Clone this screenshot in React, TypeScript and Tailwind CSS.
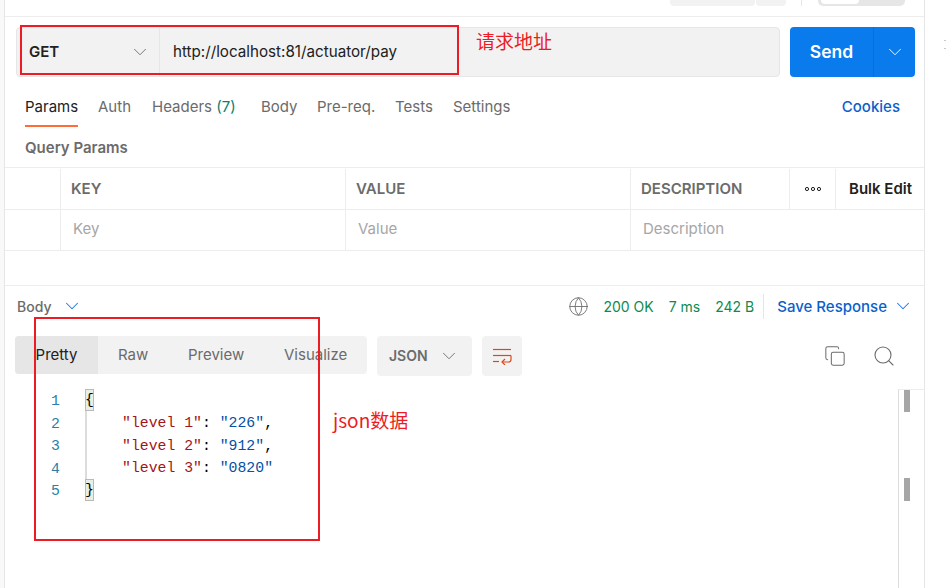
import { ChevronDown, Copy, Globe, Search } from 'lucide-react';

const requestTabs = [
  { label: 'Params', active: true, width: 'w-[73px]' },
  { label: 'Auth', width: 'w-[54px]' },
  { label: 'Headers', count: '(7)', width: 'w-[109px]' },
  { label: 'Body', width: 'w-[56px]' },
  { label: 'Pre-req.', width: 'w-[78px]' },
  { label: 'Tests', width: 'w-[58px]' },
  { label: 'Settings', width: 'w-[70px]' },
];

const codeLines = [
  { key: 'level 1', value: '226', comma: true },
  { key: 'level 2', value: '912', comma: true },
  { key: 'level 3', value: '0820', comma: false },
];

function Bracket({ glyph }: { glyph: string }) {
  return (
    <span className="flex h-[22px] w-[9px] items-center justify-center border border-[#b9b9b9] bg-[#e8efe6] text-black">
      {glyph}
    </span>
  );
}

function App() {
  return (
    <div className="relative flex h-[588px] w-[946px] overflow-hidden bg-white font-['Inter',sans-serif] text-[15px] text-[#6b6b6b]">
      <div className="w-[5px] shrink-0 border-r border-[#e6e6e6] bg-[#f9f9f9]" />

      <div className="flex w-[920px] shrink-0 flex-col border-r border-[#e6e6e6]">
        {/* top strip */}
        <div className="flex h-[17px] shrink-0 items-start justify-end border-b border-[#ededed] pr-[19px]">
          <div className="h-[6px] w-[85px] rounded-b-[4px] bg-[#f2f2f2]" />
          <div className="ml-[1px] h-[6px] w-[30px] rounded-b-[4px] bg-[#f2f2f2]" />
          <div className="ml-[15px] h-[6px] w-px bg-[#e6e6e6]" />
          <div className="ml-[16px] flex h-[6px] w-[87px] rounded-b-[5px] bg-[#e6e6e6]">
            <div className="ml-[3px] h-[4px] w-[38px] rounded-b-[4px] bg-white" />
          </div>
        </div>

        {/* url bar */}
        <div className="mt-[10px] flex h-[50px] shrink-0 gap-[10px] pl-[11px]">
          <div className="flex w-[764px] rounded-[4px] border border-[#e6e6e6] bg-[#f2f2f2]">
            <div className="flex w-[143px] items-center justify-between border-r border-[#e6e6e6] pl-[12px] pr-[8px]">
              <span className="pt-[1px] font-semibold text-[#212121]">GET</span>
              <ChevronDown className="h-[22px] w-[22px] text-[#6b6b6b]" strokeWidth={1} />
            </div>
            <div className="flex items-center pl-[13px] text-[15.2px] text-[#212121]">http://localhost:81/actuator/pay</div>
          </div>
          <div className="flex w-[125px] rounded-[4px] bg-[#097bed] text-white">
            <div className="flex w-[84px] items-center justify-center border-r border-[#0a6fd4] text-[17.5px] font-semibold">Send</div>
            <div className="flex flex-1 items-center justify-center">
              <ChevronDown className="h-[22px] w-[22px]" strokeWidth={1} />
            </div>
          </div>
        </div>

        {/* request tabs */}
        <div className="flex h-[50px] shrink-0 pl-[20px] pr-[24px]">
          {requestTabs.map((tab) => (
            <div key={tab.label} className={`${tab.width} pt-[21px] leading-[17px] whitespace-nowrap`}>
              <span className={tab.active ? 'inline-block h-[29px] border-b-2 border-[#ff6c37] text-[#212121]' : ''}>{tab.label}</span>
              {tab.count && <span className="text-[#0a7f6f]"> {tab.count}</span>}
            </div>
          ))}
          <div className="ml-auto pt-[21px] font-medium leading-[17px] text-[#0b5fcc]">Cookies</div>
        </div>

        <div className="h-[40px] shrink-0 pl-[20px] pt-[12px] font-semibold leading-[17px] text-[#6b6b6b]">Query Params</div>

        {/* params table */}
        <div className="shrink-0 border-t border-[#ededed]">
          <div className="flex h-[42px] border-b border-[#ededed] pt-[1px] font-semibold">
            <div className="w-[56px] border-r border-[#ededed]" />
            <div className="flex w-[285px] items-center border-r border-[#ededed] pl-[10px] pt-[1px]">KEY</div>
            <div className="flex w-[285px] items-center border-r border-[#ededed] pl-[10px] pt-[1px]">VALUE</div>
            <div className="flex w-[159px] items-center border-r border-[#ededed] pl-[10px] pt-[1px]">DESCRIPTION</div>
            <div className="flex w-[46px] items-center justify-center border-r border-[#ededed]">
              <svg width="18" height="6" viewBox="0 0 18 6" fill="none" stroke="#212121" strokeWidth="1">
                <circle cx="3" cy="3" r="1.6" />
                <circle cx="9" cy="3" r="1.6" />
                <circle cx="15" cy="3" r="1.6" />
              </svg>
            </div>
            <div className="flex flex-1 items-center pl-[13px] pt-[1px] text-[#212121]">Bulk Edit</div>
          </div>
          <div className="flex h-[41px] border-b border-[#ededed] text-[#a6a6a6]">
            <div className="w-[56px] border-r border-[#ededed]" />
            <div className="flex w-[285px] items-center border-r border-[#ededed] pb-[2px] pl-[12px]">Key</div>
            <div className="flex w-[285px] items-center border-r border-[#ededed] pb-[2px] pl-[12px]">Value</div>
            <div className="flex flex-1 items-center pb-[2px] pl-[12px]">Description</div>
          </div>
        </div>

        {/* response */}
        <div className="mt-[34px] flex h-[42px] shrink-0 items-center border-t border-[#ededed] pb-[1px] pl-[12px] pr-[10px]">
          <span className="text-[14px] font-medium">Body</span>
          <ChevronDown className="ml-[10px] h-[22px] w-[22px] text-[#1a73e8]" strokeWidth={1.1} />
          <Globe className="ml-auto h-[21px] w-[21px] text-[#6b6b6b]" strokeWidth={1} />
          <span className="ml-[14px] text-[14px] text-[#0e8a4f]">200 OK</span>
          <span className="ml-[15px] text-[14px] text-[#0e8a4f]">7 ms</span>
          <span className="ml-[15px] text-[14px] text-[#0e8a4f]">242 B</span>
          <div className="ml-[9px] h-[25px] w-px bg-[#e6e6e6]" />
          <span className="ml-[13px] mt-[2px] font-medium text-[#0b5fcc]">Save Response</span>
          <ChevronDown className="ml-[5px] h-[22px] w-[22px] text-[#1a73e8]" strokeWidth={1.1} />
        </div>

        <div className="mt-[9px] flex h-[40px] shrink-0 items-start pl-[10px] pr-[28px]">
          <div className="flex h-[38px] w-[352px] items-center rounded-[4px] bg-[#f2f2f2]">
            <div className="flex h-full w-[83px] items-center justify-center rounded-l-[4px] bg-[#e6e6e6] text-[#212121]">Pretty</div>
            <div className="ml-[20px] w-[70px]">Raw</div>
            <div className="w-[96px]">Preview</div>
            <div>Visualize</div>
          </div>
          <div className="ml-[10px] flex h-[40px] w-[95px] items-center justify-between rounded-[4px] bg-[#f2f2f2] pl-[12px] pr-[12px] text-[14px] font-semibold">
            <span className="pb-[2px]">JSON</span>
            <ChevronDown className="h-[22px] w-[22px]" strokeWidth={1} />
          </div>
          <div className="ml-[10px] flex h-[40px] w-[40px] items-center justify-center rounded-[4px] bg-[#f2f2f2]">
            <svg width="20" height="18" viewBox="0 0 20 18" fill="none" stroke="#d9491f" strokeWidth="1.2">
              <path d="M1 2.5h18" />
              <path d="M1 8.5h18" />
              <path d="M1 14.5h6" />
              <path d="M19 8.5v4a2.5 2.5 0 0 1-2.5 2.5H10" />
              <path d="M13 12l-3 3 3 3" />
            </svg>
          </div>
          <Copy className="ml-auto mt-[9px] h-[22px] w-[22px] text-[#6b6b6b]" strokeWidth={1.1} />
          <Search className="ml-[26px] mt-[8px] h-[24px] w-[24px] text-[#6b6b6b]" strokeWidth={1.1} />
        </div>

        {/* code */}
        <div className="mt-[13px] flex flex-1 font-['Liberation_Mono',monospace] text-[14.8px] leading-[22.5px]">
          <div className="w-[56px] pl-[46px] pt-[1px] text-[#2a7fa8]">
            {[1, 2, 3, 4, 5].map((n) => (
              <div key={n}>{n}</div>
            ))}
          </div>
          <div className="ml-[24px] flex-1">
            <Bracket glyph="{" />
            <div className="h-[68px] border-l-2 border-[#dcdcdc] pl-[35px] pt-[1px]">
              {codeLines.map((line) => (
                <div key={line.key} className="whitespace-pre">
                  <span className="text-[#a31515]">"{line.key}"</span>
                  <span className="text-black">: </span>
                  <span className="text-[#0451a5]">"{line.value}"</span>
                  {line.comma && <span className="text-black">,</span>}
                </div>
              ))}
            </div>
            <Bracket glyph="}" />
          </div>
          <div className="flex w-[26px] flex-col border-l border-t border-l-[#dcdcdc] border-t-[#ededed] pl-[5px]">
            <div className="h-[22px] w-[6px] bg-[#a6a6a6]" />
            <div className="mt-[66px] h-[23px] w-[6px] bg-[#a6a6a6]" />
          </div>
        </div>
      </div>

      <div className="ml-auto mr-0 mt-[40px] h-[9px] w-[2px] border-y border-[#c8c8c8]" />

      {/* annotations */}
      <div className="absolute left-[20px] top-[25px] h-[50px] w-[439px] border-2 border-[#ed1c24]" />
      <span className="absolute left-[476px] top-[28px] font-['Noto_Sans_CJK_SC',sans-serif] text-[19px] leading-[26px] text-[#ed1c24]">请求地址</span>
      <div className="absolute left-[34px] top-[317px] h-[224px] w-[286px] border-2 border-[#ed1c24]" />
      <span className="absolute left-[333px] top-[407px] font-['Noto_Sans_CJK_SC',sans-serif] text-[19px] leading-[26px] text-[#ed1c24]">json数据</span>
    </div>
  );
}

export default App;
